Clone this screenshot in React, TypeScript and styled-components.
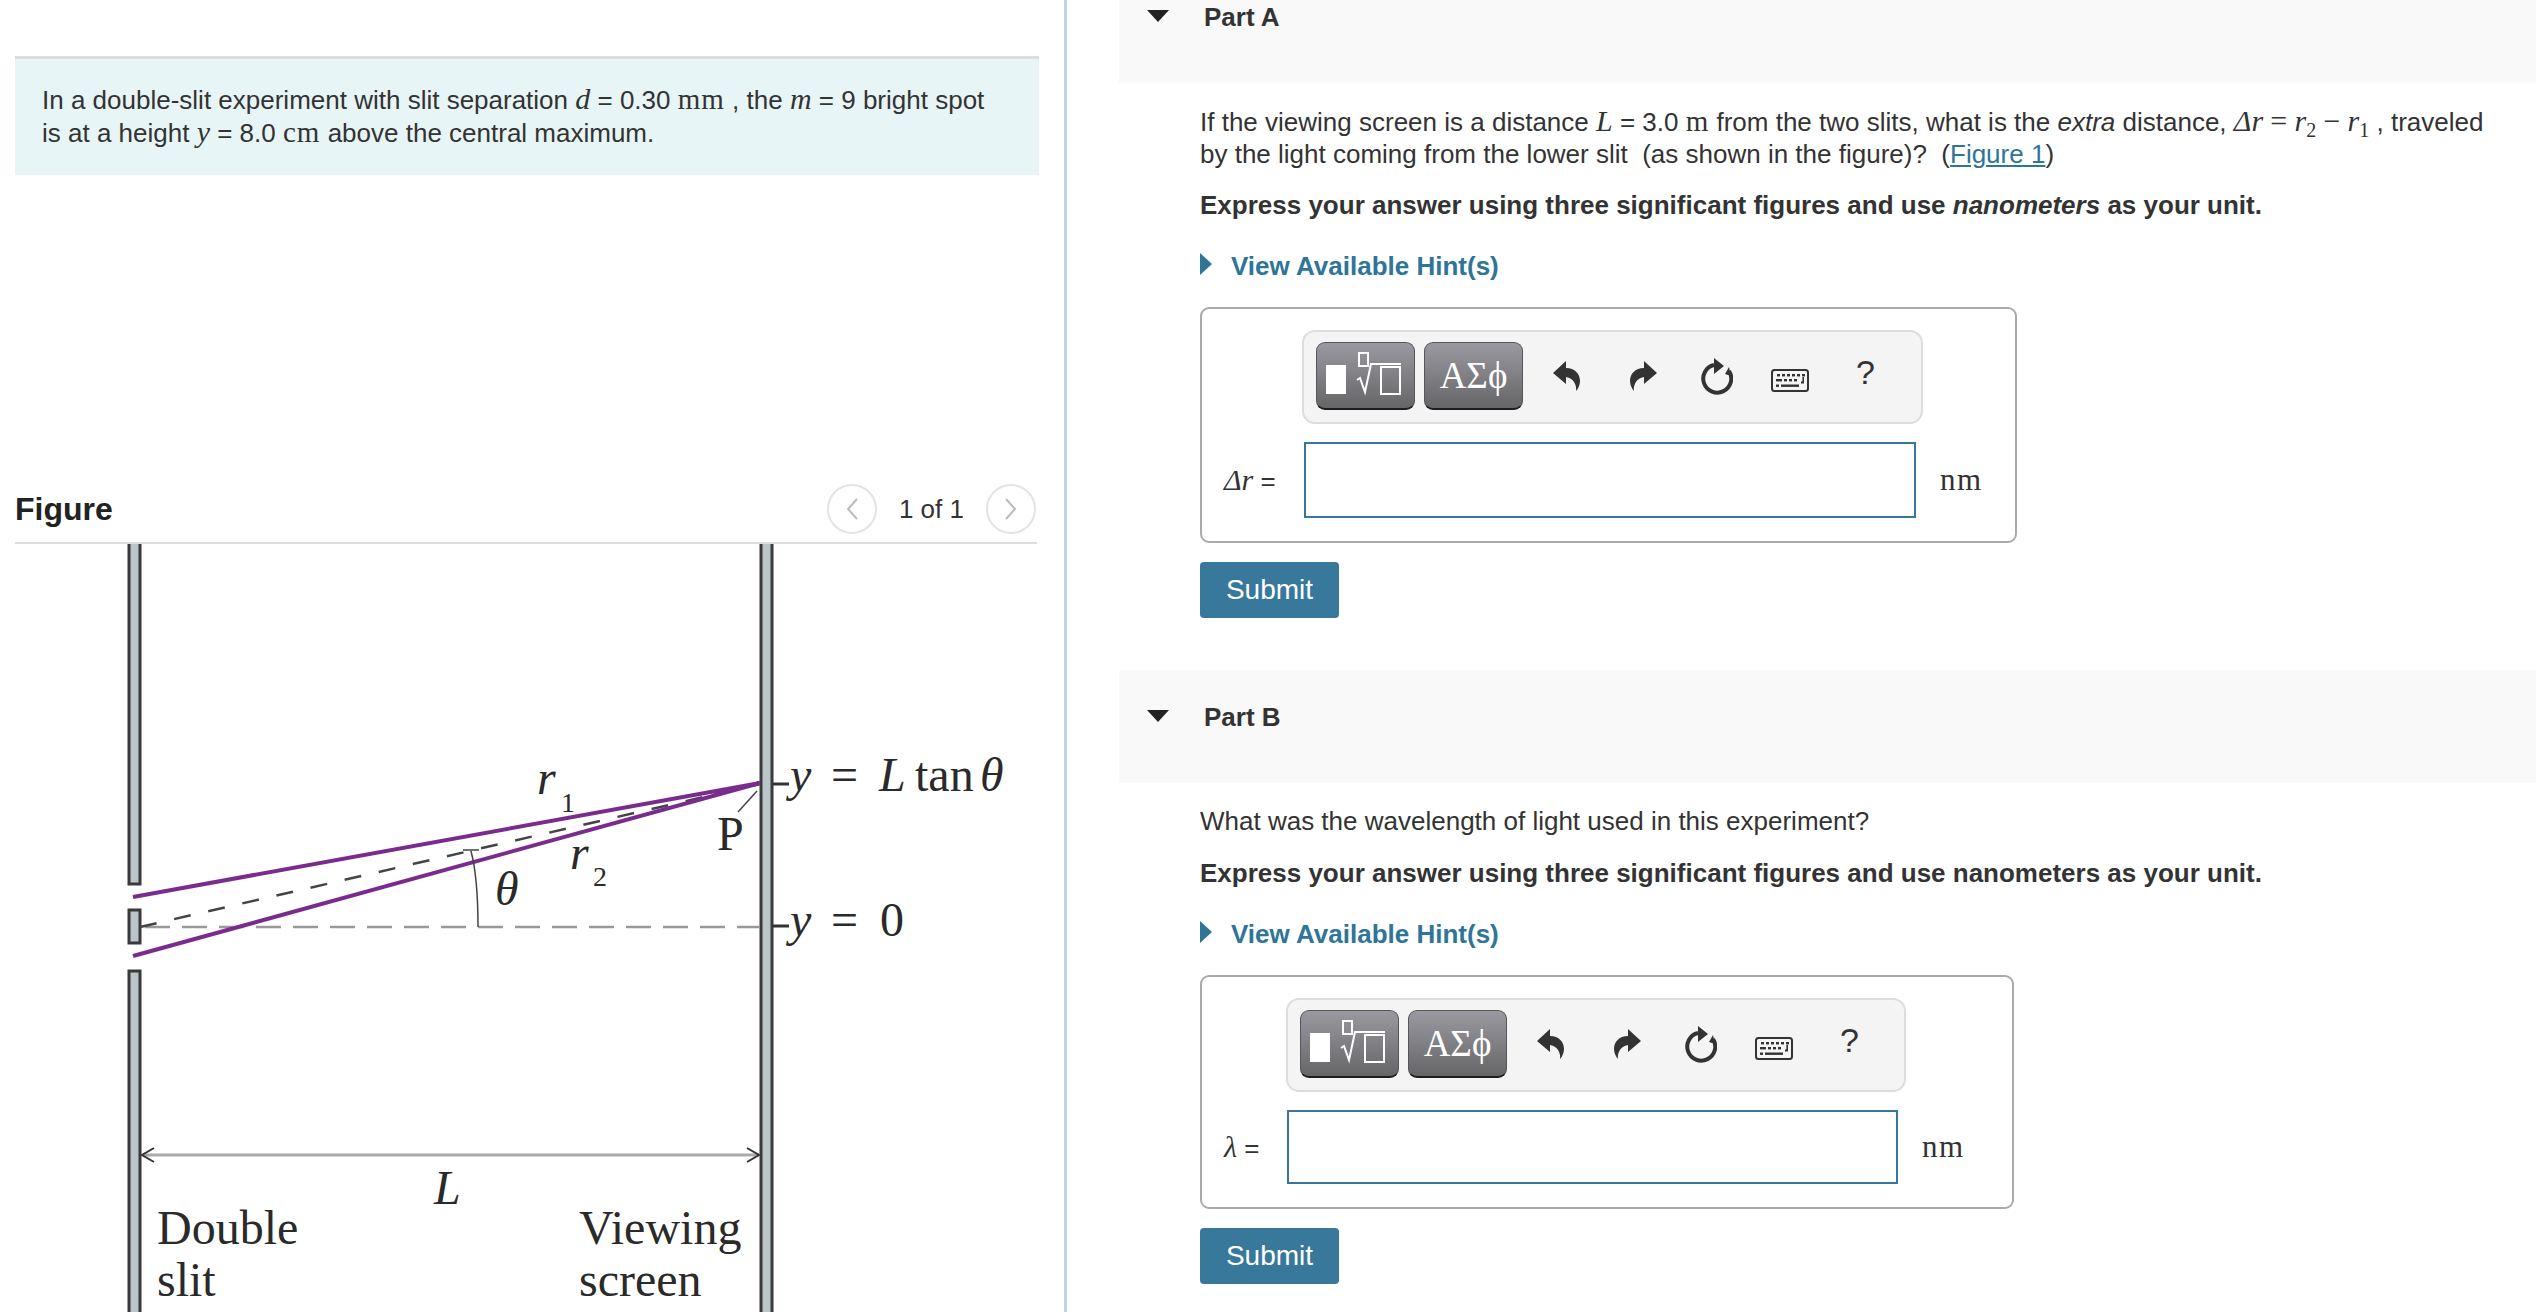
import React from "react";
import styled, { createGlobalStyle } from "styled-components";

const GlobalStyle = createGlobalStyle`
  html, body {
    margin: 0;
    padding: 0;
    background: #fff;
    height: 100%;
    overflow: hidden;
  }
  body {
    font-family: "Liberation Sans", Arial, sans-serif;
    font-size: 26px;
    line-height: 32px;
    color: #333;
  }
`;

const Page = styled.div`
  display: flex;
  width: 2536px;
  height: 1312px;
  overflow: hidden;
`;

const LeftPane = styled.section`
  width: 1064px;
  flex: none;
  padding: 56px 25px 0 15px;
  box-sizing: border-box;
`;

const Divider = styled.div`
  width: 3px;
  flex: none;
  background: #c3d1e4;
`;

const RightPane = styled.section`
  flex: 1;
  margin: -30px 0 0 52px;
`;

const IntroBox = styled.div`
  background: #e8f5f7;
  border-top: 3px solid #dddddd;
  padding: 24px 27px 26px;
  width: 1024px;
  box-sizing: border-box;
`;

const FigureHead = styled.header`
  display: flex;
  align-items: center;
  justify-content: space-between;
  height: 67px;
  margin-top: 300px;
  border-bottom: 2px solid #dddddd;
  width: 1022px;
`;

const FigureTitle = styled.h2`
  margin: 0;
  font-size: 32px;
  font-weight: bold;
  color: #222;
`;

const Pager = styled.div`
  display: flex;
  align-items: center;
  gap: 22px;
  margin-right: 1px;
  color: #333;
`;

const PagerButton = styled.span`
  width: 46px;
  height: 46px;
  border: 2px solid #e4e4e4;
  border-radius: 50%;
  display: flex;
  align-items: center;
  justify-content: center;
`;

const FigureArt = styled.svg`
  display: block;
  width: 1022px;
  height: 770px;
`;

const Serif = styled.text`
  font-family: "Liberation Serif", "Times New Roman", serif;
  fill: #2a2a2a;
  font-size: ${(p: { $size?: number }) => p.$size ?? 48}px;
`;

const SerifItalic = styled(Serif)`
  font-style: italic;
`;

const MathVar = styled.i`
  font-family: "Liberation Serif", "Times New Roman", serif;
  font-size: 30px;
`;

const MathUnit = styled.span`
  font-family: "Liberation Serif", "Times New Roman", serif;
  font-size: 29px;
  letter-spacing: 1px;
`;

const MathSub = styled.sub`
  font-family: "Liberation Serif", "Times New Roman", serif;
  font-size: 20px;
  line-height: 0;
`;

const PartHeader = styled.header`
  display: flex;
  align-items: flex-start;
  background: #f9f9f9;
  height: 113px;
  padding: 31px 0 0 28px;
  box-sizing: border-box;
  font-weight: bold;
`;

const Caret = styled.span`
  width: 0;
  height: 0;
  margin: 9px 35px 0 0;
  border-left: 11px solid transparent;
  border-right: 11px solid transparent;
  border-top: 12px solid #222;
`;

const PartBody = styled.div`
  padding: 22px 0 52px 81px;
`;

const Para = styled.p<{ $gap?: number }>`
  margin: ${(p) => p.$gap ?? 0}px 0 0;
`;

const HintRow = styled.div`
  display: flex;
  align-items: center;
  gap: 19px;
  margin-top: 29px;
  color: #2e7598;
  font-weight: bold;
`;

const HintCaret = styled.span`
  width: 0;
  height: 0;
  border-top: 11px solid transparent;
  border-bottom: 11px solid transparent;
  border-left: 12px solid #2e7598;
  margin-top: -4px;
`;

const FigureLink = styled.a`
  color: #2e7598;
  text-decoration: underline;
`;

const AnswerBox = styled.div<{ $width: number }>`
  width: ${(p) => p.$width}px;
  box-sizing: border-box;
  margin-top: 25px;
  padding: 21px 0 23px;
  border: 2px solid #aaaaaa;
  border-radius: 9px;
`;

const Toolbar = styled.div<{ $indent: number; $width: number }>`
  display: flex;
  align-items: flex-start;
  margin-left: ${(p) => p.$indent}px;
  width: ${(p) => p.$width}px;
  height: 94px;
  box-sizing: border-box;
  padding: 10px 0 0 12px;
  background: #f4f4f4;
  border: 2px solid #dddddd;
  border-radius: 13px;
`;

const ToolButton = styled.span<{ $gap?: number }>`
  width: 99px;
  height: 68px;
  box-sizing: border-box;
  margin-left: ${(p) => p.$gap ?? 0}px;
  display: flex;
  align-items: center;
  justify-content: center;
  border: 1px solid #55555a;
  border-bottom: 2px solid #1e1e20;
  border-radius: 9px;
  background: linear-gradient(#9a99a1, #666668);
  color: #fff;
  font-family: "Liberation Serif", "Times New Roman", serif;
  font-size: 37px;
`;

const ToolIcon = styled.span<{ $gap: number; $top: number }>`
  display: block;
  margin-left: ${(p) => p.$gap}px;
  margin-top: ${(p) => p.$top}px;
  line-height: 0;
`;

const HelpMark = styled.span`
  margin-left: 47px;
  margin-top: 13px;
  line-height: 34px;
  font-size: 34px;
  color: #333;
`;

const AnswerRow = styled.div`
  display: flex;
  align-items: center;
  margin-top: 18px;
`;

const AnswerLabel = styled.label<{ $width: number }>`
  width: ${(p) => p.$width}px;
  flex: none;
  padding-left: 22px;
  box-sizing: border-box;
  font-size: 26px;
`;

const AnswerInput = styled.div<{ $width: number; $height: number }>`
  width: ${(p) => p.$width}px;
  height: ${(p) => p.$height}px;
  box-sizing: border-box;
  border: 2px solid #36789b;
  background: #fff;
`;

const UnitLabel = styled.span`
  margin-left: 24px;
  font-family: "Liberation Serif", "Times New Roman", serif;
  font-size: 31px;
  letter-spacing: 1.5px;
`;

const SubmitButton = styled.button`
  display: block;
  width: 139px;
  height: 56px;
  margin-top: 19px;
  padding: 0;
  border: 0;
  border-radius: 4px;
  background: #37789b;
  color: #fff;
  font: 28px "Liberation Sans", Arial, sans-serif;
`;

const TemplateGlyph = () => (
  <svg width="80" height="48" viewBox="0 0 80 48">
    <rect x="0" y="13" width="20" height="29" fill="#fff" />
    <rect x="33" y="1" width="9" height="13" fill="none" stroke="#fff" strokeWidth="2" />
    <path d="M31 28l3-2 5 14 6-28h30" fill="none" stroke="#fff" strokeWidth="2" />
    <rect x="55" y="15" width="19" height="27" fill="none" stroke="#fff" strokeWidth="2" />
  </svg>
);

const UndoIcon = () => (
  <svg width="27" height="30" viewBox="0 0 27 30">
    <path d="M0 12L13 0v7c9 0 14 6 14 13 0 4-2 8-4 10 1-5-2-13-10-14v7z" fill="#333" />
  </svg>
);

const RedoIcon = () => (
  <svg width="27" height="30" viewBox="0 0 27 30">
    <path d="M27 12L14 0v7C5 7 0 13 0 20c0 4 2 8 4 10-1-5 2-13 10-14v7z" fill="#333" />
  </svg>
);

const ResetIcon = () => (
  <svg width="34" height="37" viewBox="0 0 34 37">
    <path d="M15 7A14 14 0 1 0 30 13" fill="none" stroke="#333" strokeWidth="4" />
    <path d="M15 0l10 8-10 8zM30 9l2 9-6-2z" fill="#333" />
  </svg>
);

const KeyboardIcon = () => {
  const topKeys = [6, 11, 16, 21, 26, 31];
  const midKeys = [13, 18, 23];
  return (
    <svg width="38" height="23" viewBox="0 0 38 23">
      <rect x="1" y="1" width="36" height="21" rx="2.5" fill="none" stroke="#333" strokeWidth="2" />
      {topKeys.map((x) => (
        <rect key={x} x={x} y="5" width="3" height="2.4" fill="#333" />
      ))}
      <rect x="5" y="10" width="6" height="2.4" fill="#333" />
      {midKeys.map((x) => (
        <rect key={x} x={x} y="10" width="3" height="2.4" fill="#333" />
      ))}
      <path d="M30 14.5h3V8h-1.6v4.5H30z" fill="#333" />
      <rect x="5" y="15.5" width="3" height="2.4" fill="#333" />
      <rect x="10" y="15.5" width="18" height="2.4" fill="#333" />
    </svg>
  );
};

type EditorProps = {
  indent: number;
  width: number;
  boxWidth: number;
  labelWidth: number;
  inputWidth: number;
  inputHeight: number;
  label: React.ReactNode;
};

const AnswerEditor = ({
  indent,
  width,
  boxWidth,
  labelWidth,
  inputWidth,
  inputHeight,
  label,
}: EditorProps) => (
  <>
    <AnswerBox $width={boxWidth}>
      <Toolbar $indent={indent} $width={width}>
        <ToolButton>
          <TemplateGlyph />
        </ToolButton>
        <ToolButton $gap={9}>ΑΣϕ</ToolButton>
        <ToolIcon $gap={30} $top={19}>
          <UndoIcon />
        </ToolIcon>
        <ToolIcon $gap={50} $top={19}>
          <RedoIcon />
        </ToolIcon>
        <ToolIcon $gap={42} $top={16}>
          <ResetIcon />
        </ToolIcon>
        <ToolIcon $gap={38} $top={27}>
          <KeyboardIcon />
        </ToolIcon>
        <HelpMark>?</HelpMark>
      </Toolbar>
      <AnswerRow>
        <AnswerLabel $width={labelWidth}>{label}</AnswerLabel>
        <AnswerInput $width={inputWidth} $height={inputHeight} />
        <UnitLabel>nm</UnitLabel>
      </AnswerRow>
    </AnswerBox>
    <SubmitButton>Submit</SubmitButton>
  </>
);

const Hint = () => (
  <HintRow>
    <HintCaret />
    View Available Hint(s)
  </HintRow>
);

// coordinates follow the figure image, origin at its top left
const SlitFigure = () => {
  const bar = "#b9c5c7";
  const barLine = "#3a3a3a";
  return (
    <FigureArt viewBox="0 0 1022 770">
      <g fill={bar} stroke={barLine} strokeWidth="3">
        <rect x="114" y="-4" width="11" height="344" />
        <rect x="114" y="366" width="11" height="33" />
        <rect x="114" y="427" width="11" height="350" />
        <rect x="746" y="-4" width="11" height="780" />
      </g>
      <path d="M758 240h16M758 382h16" stroke="#333" strokeWidth="3" />
      <g stroke="#999" strokeWidth="2.5" strokeDasharray="25 12" fill="none">
        <path d="M130 383H745" />
      </g>
      <path d="M125 383L745 240" stroke="#444" strokeWidth="2.5" strokeDasharray="17 18" fill="none" />
      <path d="M118 353L745 239M118 412L745 239" stroke="#7a2c8e" strokeWidth="4" fill="none" />
      <path d="M456 307C462 330 463 360 463 383M448 306h16" stroke="#444" strokeWidth="1.5" fill="none" />
      <path d="M723 268l19-21" stroke="#444" strokeWidth="1.5" fill="none" />
      <SerifItalic x="522" y="250">r</SerifItalic>
      <Serif x="546" y="268" $size={28}>1</Serif>
      <SerifItalic x="555" y="325">r</SerifItalic>
      <Serif x="578" y="342" $size={28}>2</Serif>
      <SerifItalic x="480" y="361">θ</SerifItalic>
      <Serif x="702" y="306">P</Serif>
      <SerifItalic x="775" y="247">y</SerifItalic>
      <Serif x="816" y="247">=</Serif>
      <SerifItalic x="864" y="247">L</SerifItalic>
      <Serif x="900" y="247">tan</Serif>
      <SerifItalic x="965" y="247">θ</SerifItalic>
      <SerifItalic x="775" y="392">y</SerifItalic>
      <Serif x="816" y="392">=</Serif>
      <Serif x="865" y="392">0</Serif>
      <path d="M128 611H745" stroke="#aaa" strokeWidth="3" />
      <path d="M139 604l-12 7 12 7M732 604l12 7-12 7" stroke="#333" strokeWidth="2" fill="none" />
      <SerifItalic x="419" y="660">L</SerifItalic>
      <Serif x="142" y="700">Double</Serif>
      <Serif x="142" y="752">slit</Serif>
      <Serif x="564" y="700">Viewing</Serif>
      <Serif x="564" y="752">screen</Serif>
    </FigureArt>
  );
};

const App = () => (
  <Page>
    <GlobalStyle />
    <LeftPane>
      <IntroBox>
        In a double-slit experiment with slit separation <MathVar>d</MathVar> = 0.30{" "}
        <MathUnit>mm</MathUnit> , the <MathVar>m</MathVar> = 9 bright spot
        <br />
        is at a height <MathVar>y</MathVar> = 8.0 <MathUnit>cm</MathUnit> above the central maximum.
      </IntroBox>
      <FigureHead>
        <FigureTitle>Figure</FigureTitle>
        <Pager>
          <PagerButton>
            <svg width="14" height="24" viewBox="0 0 14 24">
              <path d="M12 2L3 12l9 10" fill="none" stroke="#bbb" strokeWidth="2" />
            </svg>
          </PagerButton>
          <span>1 of 1</span>
          <PagerButton>
            <svg width="14" height="24" viewBox="0 0 14 24">
              <path d="M2 2l9 10-9 10" fill="none" stroke="#bbb" strokeWidth="2" />
            </svg>
          </PagerButton>
        </Pager>
      </FigureHead>
      <SlitFigure />
    </LeftPane>
    <Divider />
    <RightPane>
      <PartHeader>
        <Caret />
        Part A
      </PartHeader>
      <PartBody>
        <Para>
          If the viewing screen is a distance <MathVar>L</MathVar> = 3.0 <MathUnit>m</MathUnit> from the two
          slits, what is the <i>extra</i> distance, <MathVar>Δr</MathVar> <MathVar as="span">=</MathVar>{" "}
          <MathVar>r</MathVar>
          <MathSub>2</MathSub> <MathVar as="span">−</MathVar> <MathVar>r</MathVar>
          <MathSub>1</MathSub> , traveled
          <br />
          by the light coming from the lower slit&nbsp; (as shown in the figure)?&nbsp; (
          <FigureLink href="#figure">Figure 1</FigureLink>)
        </Para>
        <Para $gap={19}>
          <b>
            Express your answer using three significant figures and use <i>nanometers</i> as your unit.
          </b>
        </Para>
        <Hint />
        <AnswerEditor
          indent={100}
          width={621}
          boxWidth={817}
          labelWidth={102}
          inputWidth={612}
          inputHeight={76}
          label={
            <>
              <MathVar>Δr</MathVar> =
            </>
          }
        />
      </PartBody>
      <PartHeader>
        <Caret />
        Part B
      </PartHeader>
      <PartBody>
        <Para>What was the wavelength of light used in this experiment?</Para>
        <Para $gap={20}>
          <b>Express your answer using three significant figures and use nanometers as your unit.</b>
        </Para>
        <Hint />
        <AnswerEditor
          indent={84}
          width={620}
          boxWidth={814}
          labelWidth={85}
          inputWidth={611}
          inputHeight={74}
          label={
            <>
              <MathVar>λ</MathVar> =
            </>
          }
        />
      </PartBody>
    </RightPane>
  </Page>
);

export default App;
